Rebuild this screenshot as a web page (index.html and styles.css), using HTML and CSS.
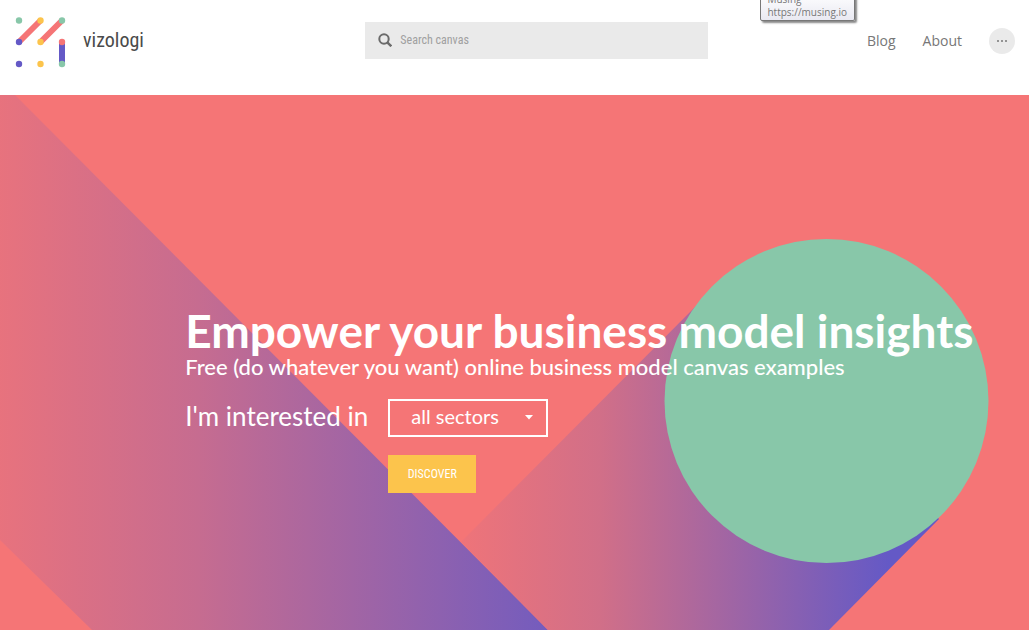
FILE: index.html
```html
<!DOCTYPE html>
<html lang="en">
<head>
<meta charset="utf-8">
<meta name="viewport" content="width=device-width, initial-scale=1">
<title>vizologi</title>
<link rel="stylesheet" href="styles.css">
</head>
<body>
<header class="header">
  <a class="brand" href="#">
    <svg class="brand-mark" width="52" height="52" viewBox="0 0 52 52" aria-hidden="true">
      <g stroke-width="6" stroke="#f57576">
        <path d="M5 26 26.500 4.500M26.500 26 48 4.500"/>
        <path d="M48 26V48" stroke="#6459c6"/>
      </g>
      <g fill="#88c7a9"><circle cx="5" cy="4.500" r="3.200"/><circle cx="48" cy="4.500" r="3.200"/><circle cx="48" cy="48" r="3.200"/></g>
      <g fill="#fcc44c"><circle cx="26.500" cy="4.500" r="3.200"/><circle cx="26.500" cy="26" r="3.200"/><circle cx="26.500" cy="48" r="3.200"/></g>
      <g fill="#6459c6"><circle cx="5" cy="26" r="3.200"/><circle cx="5" cy="48" r="3.200"/></g>
      <circle cx="48" cy="26" r="3.200" fill="#f57576"/>
    </svg>
    <span class="brand-name">vizologi</span>
  </a>
  <form class="search" role="search">
    <svg width="14" height="14" viewBox="0 0 14 14" fill="none" stroke="#6b6b6b" stroke-width="2" aria-hidden="true">
      <circle cx="6" cy="6" r="4.700"/><path d="m9.300 9.300 4 4" stroke-width="2.400"/>
    </svg>
    <input class="search-input" type="search" placeholder="Search canvas" aria-label="Search canvas">
  </form>
  <nav class="nav">
    <a href="#">Blog</a>
    <a href="#">About</a>
    <button class="more" type="button" aria-label="More">
      <svg width="12" height="4" viewBox="0 0 12 4" fill="#777" aria-hidden="true"><circle cx="2" cy="2" r="1"/><circle cx="6" cy="2" r="1"/><circle cx="10" cy="2" r="1"/></svg>
    </button>
  </nav>
  <div class="tooltip" role="tooltip">Musing<br>https://musing.io</div>
</header>
<main class="hero">
  <svg class="hero-art" viewBox="0 0 1029 535" preserveAspectRatio="xMidYMin slice" aria-hidden="true">
    <defs>
      <linearGradient id="left" gradientUnits="userSpaceOnUse" x1="-80" y1="0" x2="615" y2="0"><stop offset="0" stop-color="#f57576"/><stop offset=".4" stop-color="#c66c90"/><stop offset="1" stop-color="#6459c6"/></linearGradient>
      <linearGradient id="right" gradientUnits="userSpaceOnUse" x1="430" y1="0" x2="890" y2="0"><stop offset="0" stop-color="#f57576"/><stop offset=".37" stop-color="#d16f88"/><stop offset="1" stop-color="#6459c6"/></linearGradient>
    </defs>
    <path fill="url(#left)" d="M0 0H15L548 535H92L0 445Z"/>
    <path fill="url(#right)" d="M700 207 461 447 548 535H829L939 424 827 306Z"/>
    <circle cx="826.500" cy="306" r="162" fill="#88c7a9"/>
  </svg>
  <div class="hero-content">
    <h1 class="title">Empower your business model insights</h1>
    <p class="subtitle">Free (do whatever you want) online business model canvas examples</p>
    <form class="picker">
      <label class="picker-label" for="sector">I'm interested in</label>
      <div class="select-box">
        <select class="select" id="sector"><option>all sectors</option></select>
        <svg class="caret" width="10" height="5" viewBox="0 0 10 5" fill="#fff" aria-hidden="true"><path d="M1 0H9L5 4.500Z"/></svg>
      </div>
      <button class="discover" type="button">DISCOVER</button>
    </form>
  </div>
</main>
</body>
</html>
```
FILE: styles.css
```css
* { box-sizing: border-box; }

body {
  margin: 0;
  min-height: 100vh;
  display: flex;
  flex-direction: column;
  background: #fff;
  font-family: Lato, "Open Sans", sans-serif;
}

.header {
  position: relative;
  display: grid;
  grid-template-columns: 35.5% 33.3% 1fr;
  align-items: center;
  padding: 13px 0 27px;
}

.brand {
  display: flex;
  align-items: center;
  gap: 17px;
  padding-left: 14px;
  color: #4a4a4a;
  text-decoration: none;
}

.brand-mark { margin: 3px 0 0; }

.brand-name {
  padding-bottom: 2px;
  font: 400 20px/28px "Roboto Condensed", Lato, sans-serif;
}

.search {
  display: flex;
  align-items: center;
  gap: 8px;
  height: 37px;
  padding: 0 14px 2px 13px;
  background: #eaeaea;
}

.search-input {
  flex: 1;
  min-width: 0;
  padding: 0;
  border: 0;
  outline: 0;
  background: none;
  color: #555;
  font: 12px/20px "Roboto Condensed", Lato, sans-serif;
}

.search-input::placeholder { color: #a0a0a0; }

.nav {
  display: flex;
  align-items: center;
  justify-content: flex-end;
  gap: 27px;
  padding-right: 14px;
  font: 14px/20px "Open Sans", sans-serif;
}

.nav a {
  color: #777;
  text-decoration: none;
}

.more {
  display: grid;
  place-items: center;
  width: 26px;
  height: 26px;
  padding: 0;
  border: 0;
  border-radius: 50%;
  background: #eaeaea;
}

.tooltip {
  position: absolute;
  right: 174px;
  bottom: 74px;
  padding: 0 7px 1px 6px;
  border: 1px solid #777;
  border-radius: 2px;
  background: linear-gradient(#fff, #e9e9f2);
  box-shadow: 2px 2px 2px #888;
  color: #777;
  font: 10px/13px "Open Sans", sans-serif;
}

.hero {
  position: relative;
  flex: 1;
  padding: 212px 0 136px 18%;
  overflow: hidden;
  background: #f57576;
  color: #fff;
}

.hero-art {
  position: absolute;
  inset: 0;
  width: 100%;
  height: 100%;
}

.hero-content { position: relative; }

.title {
  margin: 0;
  font-size: 46px;
  font-weight: 700;
  line-height: 47px;
}

.subtitle {
  margin: 0 0 19px;
  font-size: 22px;
  font-weight: 500;
  line-height: 26px;
}

.picker {
  display: grid;
  grid-template-columns: auto auto;
  justify-content: start;
  justify-items: start;
  align-items: center;
  gap: 18px 20px;
}

.picker-label {
  padding-bottom: 4px;
  font-size: 26px;
  line-height: 30px;
}

.select-box {
  position: relative;
  width: 160px;
}

.select {
  appearance: none;
  display: block;
  width: 100%;
  height: 38px;
  padding: 0 32px 4px 21px;
  border: 2px solid #fff;
  border-radius: 0;
  background: transparent;
  color: #fff;
  font: 20px/30px Lato, sans-serif;
}

.caret {
  position: absolute;
  right: 14px;
  top: 16px;
  pointer-events: none;
}

.discover {
  grid-column: 2;
  width: 88px;
  height: 38px;
  padding: 0;
  border: 0;
  background: #fcc44c;
  color: #fff;
  font: 12px/20px "Roboto Condensed", Lato, sans-serif;
}
```
